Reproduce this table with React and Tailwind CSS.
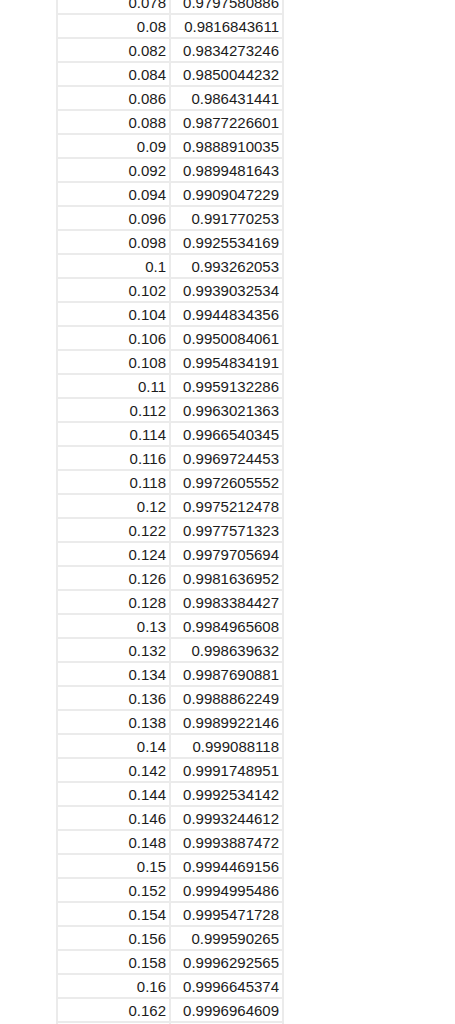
import React from 'react';

const rows = [
  ["0.078", "0.9797580886"],
  ["0.08", "0.9816843611"],
  ["0.082", "0.9834273246"],
  ["0.084", "0.9850044232"],
  ["0.086", "0.986431441"],
  ["0.088", "0.9877226601"],
  ["0.09", "0.9888910035"],
  ["0.092", "0.9899481643"],
  ["0.094", "0.9909047229"],
  ["0.096", "0.991770253"],
  ["0.098", "0.9925534169"],
  ["0.1", "0.993262053"],
  ["0.102", "0.9939032534"],
  ["0.104", "0.9944834356"],
  ["0.106", "0.9950084061"],
  ["0.108", "0.9954834191"],
  ["0.11", "0.9959132286"],
  ["0.112", "0.9963021363"],
  ["0.114", "0.9966540345"],
  ["0.116", "0.9969724453"],
  ["0.118", "0.9972605552"],
  ["0.12", "0.9975212478"],
  ["0.122", "0.9977571323"],
  ["0.124", "0.9979705694"],
  ["0.126", "0.9981636952"],
  ["0.128", "0.9983384427"],
  ["0.13", "0.9984965608"],
  ["0.132", "0.998639632"],
  ["0.134", "0.9987690881"],
  ["0.136", "0.9988862249"],
  ["0.138", "0.9989922146"],
  ["0.14", "0.999088118"],
  ["0.142", "0.9991748951"],
  ["0.144", "0.9992534142"],
  ["0.146", "0.9993244612"],
  ["0.148", "0.9993887472"],
  ["0.15", "0.9994469156"],
  ["0.152", "0.9994995486"],
  ["0.154", "0.9995471728"],
  ["0.156", "0.999590265"],
  ["0.158", "0.9996292565"],
  ["0.16", "0.9996645374"],
  ["0.162", "0.9996964609"],
  ["", ""],
];

export default function App() {
  return (
    <div className="h-[1024px] w-full bg-white overflow-hidden font-['Liberation_Sans',Arial,sans-serif] text-[15px] text-[#1c1c1c]">
      <div className="-mt-[9px] ml-[56px] w-[228px] border-l-2 border-[#ebebeb]">
        {rows.map(([x, y], i) => (
          <div key={i} className="flex h-[24px] border-b-2 border-[#ebebeb]">
            <div className="w-[113px] flex items-center justify-end pr-[3px] border-r-2 border-[#ebebeb] leading-none">{x}</div>
            <div className="w-[113px] flex items-center justify-end pr-[3px] border-r-2 border-[#ebebeb] leading-none">{y}</div>
          </div>
        ))}
      </div>
    </div>
  );
}
